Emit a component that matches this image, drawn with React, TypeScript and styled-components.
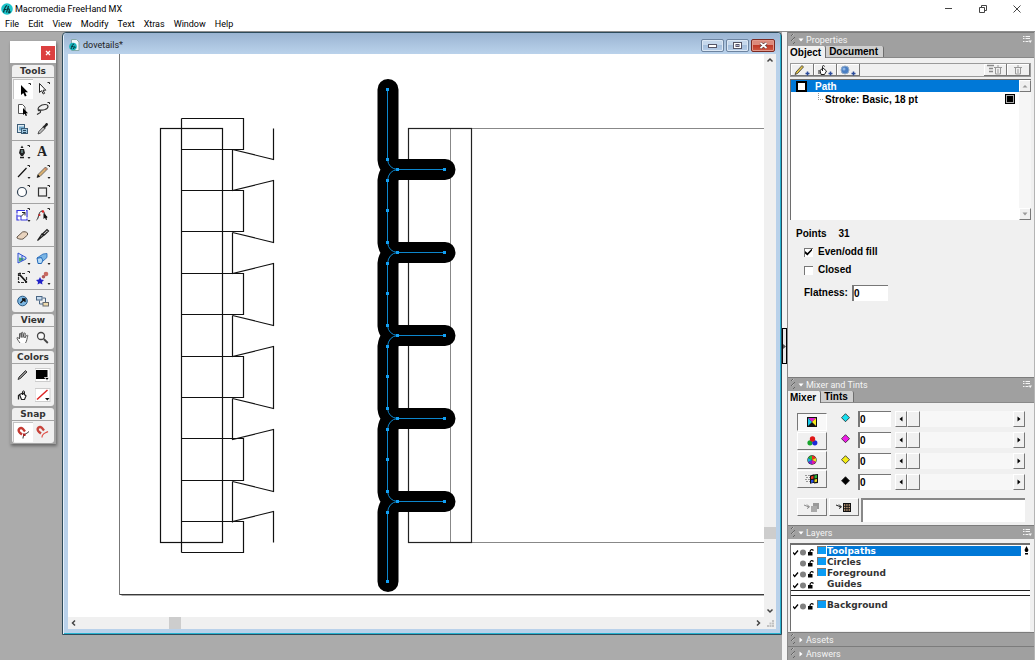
import React from "react";
import styled, { createGlobalStyle, css } from "styled-components";

const ui = `Roboto, "Noto Sans", sans-serif`;
const bold = `"Liberation Sans", Arial, sans-serif`;
const wide = `"DejaVu Sans", Verdana, sans-serif`;

const GlobalStyle = createGlobalStyle`
  *, *::before, *::after { box-sizing: border-box; }
  body { margin: 0; background: #ababab; font-family: ${ui}; font-size: 9px; color: #000; }
  button, input { font: inherit; color: inherit; margin: 0; padding: 0; border: 0; background: none; border-radius: 0; }
  h1, h2, h3, ul { margin: 0; padding: 0; font: inherit; list-style: none; }
  svg { display: block; flex: none; }
`;

/* ---------- application frame ---------- */

const Shell = styled.div`
  display: flex;
  flex-direction: column;
  min-height: 100vh;
`;

const TitleBar = styled.header`
  display: flex;
  align-items: center;
  height: 17px;
  padding: 0 1px;
  background: #fff;
`;

const AppTitle = styled.h1`
  flex: 1;
  padding-left: 2px;
  font-size: 9px;
  line-height: 16px;
`;

const CaptionButton = styled.button`
  display: flex;
  align-items: center;
  justify-content: center;
  width: 34px;
  height: 16px;
`;

const MenuBar = styled.nav`
  display: flex;
  gap: 1px;
  height: 15px;
  padding-left: 1px;
  background: #fff;
  border-bottom: 1px solid #8e8e8e;
`;

const MenuItem = styled.button`
  padding: 0 4px;
  line-height: 13px;
`;

const Workspace = styled.div`
  display: flex;
  flex: 1;
  align-items: stretch;
  background: #ababab;
`;

/* ---------- tool palette ---------- */

const Palette = styled.aside`
  align-self: flex-start;
  width: 46px;
  margin: 9px 6px 0 10px;
  background: #a2a2a2;
  box-shadow: 1px 2px 3px rgba(0, 0, 0, 0.4);
`;

const PaletteCaption = styled.div`
  display: flex;
  justify-content: flex-end;
  height: 22px;
  padding: 5px 1px 0 0;
  background: #fff;
`;

const PaletteClose = styled.button`
  display: flex;
  align-items: center;
  justify-content: center;
  width: 14px;
  height: 14px;
  background: #dc4040;
`;

const PaletteBody = styled.div`
  display: flex;
  flex-direction: column;
  gap: 2px;
  padding: 2px 2px 1px;
`;

const Section = styled.section`
  background: #f0f0f0;
  border-radius: 3px;
`;

const SectionTitle = styled.h2`
  font: bold 9px/13px ${wide};
  text-align: center;
  height: 12px;
  color: #333;
`;

const ToolGroup = styled.div`
  display: grid;
  grid-template-columns: 20px 20px;
  grid-auto-rows: 20px;
  padding: 1px;
  border-top: 1px solid #a4a4a4;
`;

const Tool = styled.button<{ $active?: boolean }>`
  display: flex;
  align-items: center;
  justify-content: center;
  ${(p) =>
    p.$active &&
    css`
      background: #fff;
      border-left: 1px solid #c4c4c4;
      border-top: 1px solid #c4c4c4;
    `}
`;

/* ---------- document window ---------- */

const DocFrame = styled.section`
  display: flex;
  flex-direction: column;
  flex: 1;
  min-width: 0;
  margin-bottom: 25px;
  border: 1px solid #2d4a5a;
  border-radius: 4px 4px 0 0;
  background: #b9d1ea;
  box-shadow: inset 1px 1px 0 #e6f1fb, inset -1px -1px 0 #27b3d0;
  padding: 0 5px 5px;
`;

const DocTitleBar = styled.div`
  display: flex;
  align-items: center;
  height: 21px;
  margin: 0 -4px;
  padding: 3px 5px 0;
  gap: 2px;
  background: linear-gradient(#9ab4d2, #bad2eb);
  border-radius: 3px 3px 0 0;
`;

const DocTitle = styled.h2`
  flex: 1;
  padding-left: 1px;
  font-size: 9px;
  line-height: 14px;
  color: #222;
`;

const DocButton = styled.button<{ $close?: boolean }>`
  display: flex;
  align-items: center;
  justify-content: center;
  width: ${(p) => (p.$close ? 24 : 23)}px;
  height: 13px;
  border: 1px solid ${(p) => (p.$close ? "#7c2a22" : "#6d84a0")};
  border-radius: 2px;
  box-shadow: inset 0 0 0 1px ${(p) => (p.$close ? "#e39a8c" : "#dce8f5")};
  background: ${(p) =>
    p.$close
      ? "linear-gradient(#dc8a7c 45%, #c03a28 50%, #cf5a44)"
      : "linear-gradient(#c6d8ec 45%, #a5bfdc 50%, #b6cde8)"};
`;

const DocContent = styled.div`
  display: grid;
  flex: 1;
  grid-template-columns: minmax(0, 1fr) 12px;
  grid-template-rows: minmax(0, 1fr) 12px;
  background: #f0f0f0;
`;

const CanvasView = styled.div`
  display: flex;
  background: #fff;
  overflow: hidden;
  min-height: 400px;
`;

const Artboard = styled.svg`
  width: 100%;
  height: auto;
`;

const VScroll = styled.div`
  display: flex;
  flex-direction: column;
  align-items: center;
`;

const HScroll = styled.div`
  display: flex;
  align-items: center;
`;

const ScrollArrow = styled.button`
  display: flex;
  align-items: center;
  justify-content: center;
  width: 12px;
  height: 12px;
`;

const Spacer = styled.div<{ $grow: number }>`
  flex: ${(p) => p.$grow} 1 0;
`;

const ScrollThumb = styled.div`
  width: 12px;
  height: 12px;
  background: #cdcdcd;
`;

const GripCorner = styled.div`
  display: flex;
  align-items: flex-end;
  justify-content: flex-end;
  padding: 2px;
`;

/* ---------- dock ---------- */

const Splitter = styled.div`
  display: flex;
  align-items: center;
  width: 5px;
  background: #f4f4f4;
`;

const SplitterHandle = styled.button`
  display: flex;
  align-items: center;
  justify-content: center;
  width: 5px;
  height: 36px;
  border: 1px solid #000;
  background: #e8e8e8;
`;

const Dock = styled.aside`
  display: flex;
  flex-direction: column;
  width: 248px;
  border-left: 1px solid #8a8a8a;
  border-right: 1px solid #b4b4b4;
  background: #f0f0f0;
`;

const PanelBox = styled.section<{ $grow?: boolean }>`
  display: flex;
  flex-direction: column;
  flex: ${(p) => (p.$grow ? "1 0 auto" : "none")};
  border-top: 1px solid #7c7c7c;
`;

const PanelHeader = styled.div`
  display: flex;
  align-items: center;
  height: 13px;
  padding: 0 2px;
  gap: 2px;
  background: #a0a0a0;
  color: #f4f4f4;
`;

const PanelTitle = styled.h2`
  flex: 1;
  font: 9px/12px ${ui};
`;

const PlainButton = styled.button`
  display: flex;
  align-items: center;
  justify-content: center;
`;

const TabRow = styled.div`
  display: flex;
  align-items: flex-end;
  height: 12px;
  background: #a0a0a0;
  border-bottom: 1px solid #888;
`;

const Tab = styled.button<{ $active?: boolean }>`
  height: ${(p) => (p.$active ? 12 : 11)}px;
  margin-bottom: ${(p) => (p.$active ? -1 : 0)}px;
  padding: 0 ${(p) => (p.$active ? 4 : 5)}px 0 ${(p) => (p.$active ? 2 : 3)}px;
  font: bold 10px/11px ${bold};
  background: ${(p) => (p.$active ? "#f0f0f0" : "#cfcfcf")};
  border-right: 1px solid #6e6e6e;
  border-radius: 0 2px 0 0;
`;

const PropertiesBody = styled.div`
  display: flex;
  flex-direction: column;
  flex: 1;
  padding: 5px 3px 0 2px;
  font: bold 10px/14px ${bold};
`;

const ObjectToolbar = styled.div`
  display: flex;
  height: 14px;
  border: 1px solid #9a9a9a;
`;

const ObjectTool = styled.button<{ $push?: boolean }>`
  display: flex;
  align-items: center;
  justify-content: center;
  width: 23px;
  border-right: 1px solid #777;
  border-bottom: 1px solid #777;
  box-shadow: inset 1px 1px 0 #fff;
  margin-left: ${(p) => (p.$push ? "auto" : "0")};
`;

const ObjectList = styled.div`
  display: flex;
  height: 141px;
  margin-top: 2px;
  border-left: 1px solid #6e6e6e;
  border-top: 1px solid #6e6e6e;
  background: #fff;
`;

const ObjectRows = styled.ul`
  flex: 1;
  font: bold 10px/13px ${bold};
`;

const PathRow = styled.li`
  display: flex;
  align-items: center;
  height: 12px;
  gap: 8px;
  padding-left: 5px;
  background: #0078d7;
  color: #fff;
`;

const FillChip = styled.span`
  width: 11px;
  height: 11px;
  border: 2px solid #000;
  background: #fff;
`;

const StrokeRow = styled.li`
  display: flex;
  align-items: center;
  height: 14px;
  padding: 0 4px 0 27px;
`;

const TreeElbow = styled.span`
  width: 5px;
  height: 7px;
  margin: 0 2px 6px 0;
  border-left: 1px dotted #999;
  border-bottom: 1px dotted #999;
`;

const StrokeLabel = styled.span`
  flex: 1;
`;

const StrokeChip = styled.span`
  width: 10px;
  height: 10px;
  border: 1px solid #000;
  background: #000;
  box-shadow: inset 0 0 0 1px #aaa;
`;

const ListScroll = styled.div`
  display: flex;
  flex-direction: column;
  justify-content: space-between;
  width: 12px;
  background: #f6f6f6;
`;

const raised = css`
  background: #f0f0f0;
  border: solid;
  border-width: 1px;
  border-color: #fff #777 #777 #fff;
`;

const ListArrow = styled.button`
  ${raised}
  display: flex;
  align-items: center;
  justify-content: center;
  width: 12px;
  height: 12px;
`;

const ObjectForm = styled.div`
  display: flex;
  flex-direction: column;
  padding: 7px 6px 0;
`;

const PointsRow = styled.div`
  display: flex;
  gap: 12px;
  height: 16px;
`;

const CheckRow = styled.label`
  display: flex;
  align-items: center;
  gap: 5px;
  height: 18px;
  padding-left: 8px;
`;

const CheckBox = styled.input`
  appearance: none;
  width: 9px;
  height: 9px;
  background: #fff;
  border-left: 1px solid #777;
  border-top: 1px solid #777;

  &:checked::after {
    content: "";
    display: block;
    width: 7px;
    height: 7px;
    background: #000;
    clip-path: polygon(0 35%, 35% 65%, 100% 0, 100% 30%, 35% 100%, 0 70%);
  }
`;

const FieldRow = styled.label`
  display: flex;
  align-items: center;
  gap: 4px;
  height: 16px;
  margin-top: 6px;
  padding-left: 8px;
`;

const NumberField = styled.input<{ $w: number }>`
  width: ${(p) => p.$w}px;
  height: 16px;
  font: bold 10px/14px ${bold};
  background: #fff;
  border-left: 2px solid #777;
  border-top: 1px solid #777;
`;

/* ---------- mixer ---------- */

const MixerBody = styled.div`
  display: flex;
  flex-direction: column;
  gap: 8px;
  padding: 8px 9px 3px;
`;

const MixerTop = styled.div`
  display: flex;
  gap: 14px;
`;

const ModeColumn = styled.div`
  display: flex;
  flex-direction: column;
  gap: 1px;
  padding-top: 2px;
`;

const MixerButton = styled.button<{ $pressed?: boolean }>`
  display: flex;
  align-items: center;
  justify-content: center;
  width: 30px;
  height: 18px;
  background: ${(p) => (p.$pressed ? "#f8f8f8" : "#f0f0f0")};
  border: solid;
  border-width: 1px;
  border-color: ${(p) => (p.$pressed ? "#777 #fff #fff #777" : "#fff #777 #777 #fff")};
`;

const Channels = styled.div`
  display: flex;
  flex-direction: column;
  flex: 1;
  min-width: 0;
  gap: 5px;
`;

const Channel = styled.div`
  display: flex;
  align-items: center;
  height: 16px;
  gap: 4px;
`;

const ChannelLabel = styled.label`
  display: flex;
  align-items: center;
  gap: 8px;
`;

const SliderTrack = styled.div`
  display: flex;
  flex: 1;
  min-width: 0;
  height: 16px;
  background: #f7f7f7;
`;

const StepButton = styled.button`
  ${raised}
  display: flex;
  flex: none;
  align-items: center;
  justify-content: center;
  width: 12px;
`;

const Slider = styled.input`
  appearance: none;
  flex: 1;
  width: 0;
  min-width: 0;
  height: 16px;

  &::-webkit-slider-thumb {
    ${raised}
    appearance: none;
    box-sizing: border-box;
    width: 13px;
    height: 16px;
  }
`;

const MixerBottom = styled.div`
  display: flex;
  gap: 2px;
`;

const Swatch = styled.div`
  flex: 1;
  height: 24px;
  background: #fff;
  border-left: 2px solid #888;
  border-top: 2px solid #888;
`;

/* ---------- layers ---------- */

const LayersBody = styled.div`
  padding: 4px 4px 1px 2px;
`;

const LayerList = styled.ul`
  height: 88px;
  background: #fff;
  border-left: 1px solid #6e6e6e;
  border-top: 2px solid #6e6e6e;
`;

const LayerRow = styled.li`
  display: flex;
  align-items: center;
  height: 11px;
  padding: 0 1px 0 2px;
  gap: 1px;
`;

const LayerName = styled.span<{ $selected?: boolean }>`
  flex: 1;
  height: 10px;
  margin-right: 2px;
  font: bold 9px/10px ${wide};
  background: ${(p) => (p.$selected ? "#0078d7" : "transparent")};
  color: ${(p) => (p.$selected ? "#fff" : "#333")};
`;

const LayerChip = styled.span<{ $on: boolean }>`
  width: 9px;
  height: 8px;
  margin: 0 0 1px 2px;
  background: ${(p) => (p.$on ? "#0a9cf5" : "transparent")};
  border-left: 1px solid ${(p) => (p.$on ? "#777" : "transparent")};
  border-top: 1px solid ${(p) => (p.$on ? "#777" : "transparent")};
`;

const LayerDivider = styled.li`
  height: 6px;
  margin: 1px 0 3px;
  border-top: 1px solid #222;
  border-bottom: 1px solid #222;
`;

/* ---------- icons ---------- */

const flyout = <path d="M12.5 1.5h2v1.500" stroke="#222" fill="none" />;
const more = <path d="M12.500 13h3l-1.500 2z" fill="#222" />;

const icons: Record<string, React.ReactNode> = {
  Pointer: (<><path d="M5 3v10l2.3-2 1.6 3.5 1.7-.8L9 10.300h3z" fill="#000" />{flyout}</>),
  Subselect: (<><path d="M4.500 2.500v9l2-1.800 1.800 3.300 1.300-.7L8 9.200h2.800z" fill="#fff" stroke="#222" />{flyout}</>),
  Page: (<><path d="M3.500 3.500h4l2.500 2.500v6.500h-6.500z" fill="#fff" stroke="#555" /><path d="M8 7v7l1.700-1.400 1 2.400 1.300-.6-1-2.200h2z" fill="#000" /></>),
  Lasso: (<><path d="M4 10c-3-3 2-6.500 6-6.500 4 0 4 3.500 0 5-3 1-5 .5-6.500 0M4 9.500c2 0 2 2 .5 2.500L2 13.500" fill="none" stroke="#333" strokeWidth="1.200" />{flyout}</>),
  "Output Area": (<><rect x="2.500" y="3.500" width="7" height="8" fill="#dfeaf2" stroke="#3b5d77" /><rect x="4" y="5.500" width="5" height="4" fill="#6fa7c9" /><rect x="6.500" y="7.500" width="6" height="5" fill="#9cc6df" stroke="#3b5d77" /><path d="M8 9.500h3M8 11.500h3" stroke="#27465c" /></>),
  Eyedropper: (<><path d="M3 13l.8-2.500L8 6l1.800 1.800L5.500 12z" fill="#bbb" stroke="#333" strokeWidth=".8" /><path d="M7.500 5l1.500-.3 1.700-2.200c1.300-1.200 3 .3 2 1.700l-2.200 2-.2 1.800z" fill="#222" /></>),
  Pen: (<><path d="M7 1.500l1.500 2.500h-3zM5 5h4l1 4-2 3H6L4 9z" fill="#222" /><path d="M7 6v3" stroke="#9cc" /><path d="M5 13.500h4" stroke="#222" strokeWidth="1.500" />{flyout}{more}</>),
  Line: (<><path d="M3 13L11.500 4" stroke="#111" strokeWidth="1.200" />{flyout}{more}</>),
  Pencil: (<><path d="M2 13.500l1-3L10.500 3l2 2L5 12.500z" fill="#d9b070" stroke="#555" strokeWidth=".8" /><path d="M2 13.500l1-3 2 2z" fill="#111" /><path d="M9.500 4l2 2" stroke="#c66" />{flyout}{more}</>),
  Ellipse: (<><circle cx="7" cy="8" r="4.500" fill="#fff" stroke="#345" strokeWidth="1.200" />{flyout}</>),
  Rectangle: (<><rect x="3.500" y="4" width="8" height="8" fill="none" stroke="#333" strokeWidth="1.200" />{flyout}{more}</>),
  Scale: (<><rect x="2" y="3.500" width="10" height="9.500" fill="#fff" stroke="#3838e0" strokeWidth="1.200" strokeDasharray="8 1" /><path d="M2.500 9h3.500v4" stroke="#3838e0" fill="none" /><path d="M6 9.500l4-4M7 5.500h3v3" stroke="#222" fill="none" />{flyout}{more}</>),
  Freeform: (<><path d="M1.500 13C4 12 3 4.500 7 4c3 0 2 4 5 7" stroke="#222" fill="none" /><path d="M8.500 6v6l1.500-1.300L11 13l1.100-.5-.9-2.300h1.600z" fill="#111" /><circle cx="4.500" cy="8" r="1" fill="#d22" /><circle cx="8" cy="4.500" r="1.200" fill="#d22" />{flyout}</>),
  Eraser: (<path d="M2 10l5.500-5c2-.5 3.500-.3 5 1v2L8 12c-2 .5-4.500 0-6-1z" fill="#e8d3be" stroke="#54463a" strokeWidth=".9" />),
  Knife: (<path d="M2.500 13.500L7 7l1.500 1.500zM8 6.500L12 2.500l1.500 1.500-4 4z" fill="#ddd" stroke="#222" strokeWidth="1.200" />),
  Perspective: (<><path d="M3 3l8 4.500v1.500l-8 4z" fill="#d8e6f6" stroke="#2c4fd0" /><path d="M4 7.500l6 1.300-6 3z" fill="#48b062" /><path d="M7 5.500v5.500" stroke="#2c4fd0" />{more}</>),
  Extrude: (<><path d="M2 8l4.500-.5 1.500 2.500-1.500 3.500H3z" fill="#b7dcf6" stroke="#2468b8" /><path d="M2 8l6-4 4-.5v4L8 11 6.500 7.500z" fill="#7ab5e4" stroke="#2468b8" strokeWidth=".8" />{more}</>),
  "Trace Tool": (<><path d="M3 3.500h7M3.500 3v9.500h8V6" stroke="#333" fill="none" strokeWidth="1.200" strokeDasharray="3 1" /><path d="M5 5l6.500 7" stroke="#111" strokeWidth="1.800" /><path d="M5 2.500v3M3 6l2-1" stroke="#111" />{flyout}</>),
  Blend: (<><path d="M5 7l1.200 2.600 2.800.4-2 2 .5 2.500L5 13.300l-2.500 1.200L3 12 1 10l2.800-.4z" fill="#2222c8" /><circle cx="11" cy="4" r="2.300" fill="#c86a60" /><circle cx="8.500" cy="6.800" r="1.800" fill="#b45a58" />{more}</>),
  Action: (<><circle cx="7.500" cy="8" r="4.800" fill="#7cb7e2" stroke="#2b5a85" /><path d="M5.500 10l4-4M7 6h3v3" stroke="#111" fill="none" strokeWidth="1.300" /></>),
  Connector: (<><rect x="1.500" y="3.500" width="5.500" height="3.500" fill="#c7dbee" stroke="#4a6684" /><rect x="8" y="9.500" width="5.500" height="3.500" fill="#f0dcae" stroke="#6a6a6a" /><path d="M4.500 7.500v3.500h3.500M7.500 5h3v4" stroke="#4a6684" fill="none" /></>),
  Hand: (<path d="M5 13C3.500 11 2 9 2 8s1.500-.5 2.500 1V4c0-1 1.200-1 1.300 0l.4 3.500.3-4.500c.1-1 1.400-1 1.400 0L8 7.500 9 3.500c.2-1 1.400-.7 1.300.2L9.800 8l1.700-2.500c.6-.8 1.600-.3 1.200.6C12 8 12 11 10.500 13" fill="#fff" stroke="#444" strokeWidth=".9" />),
  Zoom: (<><circle cx="6" cy="6" r="3.500" fill="#fafafa" stroke="#444" strokeWidth="1.300" /><path d="M8.800 9l4 4" stroke="#444" strokeWidth="1.800" /></>),
  "Stroke Color": (<path d="M3 12.500l1-2.500L10.500 3.500l1.500 1.500-6.500 6.500z" fill="#888" stroke="#222" strokeWidth=".8" />),
  "Stroke Swatch": (<><rect x="0" y="1.500" width="15" height="13" fill="#fff" stroke="#ccc" /><rect x="1" y="3" width="11.500" height="9" fill="#000" /><path d="M9.500 10.500h5l-2.500 3z" fill="#000" stroke="#fff" strokeWidth=".8" /></>),
  "Fill Color": (<><path d="M4.500 7.500L8 6l3 3-1.500 3.500h-3z" fill="#fff" stroke="#222" strokeWidth="1.200" /><path d="M7.500 8V5c0-1.500 2-1.500 2 0v2" stroke="#222" fill="none" /><path d="M3.500 12.500V8.500l1.500-1" stroke="#222" fill="none" strokeWidth="1.300" /></>),
  "Fill Swatch": (<><rect x="0" y="1.500" width="15" height="13" fill="#fff" stroke="#ccc" /><path d="M2 12.500L12.500 3" stroke="#d22" strokeWidth="1.500" /><path d="M10 11h4.500L12.300 13.500z" fill="#111" /></>),
  "Snap to Point": (<><path d="M3.500 7.500C1 4 5 1.500 7 4l2 2.500M3.500 7.500L6 9.500" stroke="#c43a32" strokeWidth="2.300" fill="none" /><path d="M7 13.500c0-4.500 3-4 6-7" stroke="#333" fill="none" /><rect x="7" y="8.500" width="2.500" height="2.500" fill="#a22" /></>),
  "Snap to Object": (<><path d="M3.500 7.500C1 4 5 1.500 7 4l2 2.500M3.500 7.500L6 9.500" stroke="#c8443c" strokeWidth="2.300" fill="none" /><path d="M7 13.500c0-4.500 3-4 6-6" stroke="#e05048" fill="none" strokeWidth="1.200" /></>),
};

const Glyph16 = ({ name }: { name: string }) => (
  <svg width="16" height="16" viewBox="0 0 16 16" aria-hidden="true">
    {name === "Text" ? (
      <text x="7" y="12" textAnchor="middle" fontFamily="Liberation Serif, serif" fontSize="14" fontWeight="bold" fill="#222">
        A
      </text>
    ) : (
      icons[name]
    )}
  </svg>
);

const AppLogo = ({ size }: { size: number }) => (
  <svg width={size} height={size} viewBox="0 0 12 12" aria-hidden="true">
    <circle cx="6" cy="6" r="5.800" fill="#1cc3c9" />
    <path d="M2.500 9.500C3.500 6 4 3 6 2.500M2.500 6.500h3M5.500 9.500l2-6.500M6 7c2-2.500 3-.5 2 1.500s1 1 1.500 0" stroke="#06353c" strokeWidth="1.200" fill="none" />
  </svg>
);

const DocIcon = () => (
  <svg width="11" height="12" viewBox="0 0 11 12" aria-hidden="true">
    <path d="M2.500.5h5l2.500 2.500v8.500h-7.500z" fill="#f3f8fb" stroke="#8aa" />
    <circle cx="4" cy="7.500" r="3.800" fill="#16b2ba" />
    <path d="M2 10c1-2 1-5 3-5M2.500 7.500h2M4.500 10c.5-3 2-3 1.500-1" stroke="#06353c" fill="none" />
  </svg>
);

const Triangle = ({ dir, color = "#000" }: { dir: "l" | "r" | "u" | "d"; color?: string }) => {
  const d = { l: "M4.500 .5v5L1.500 3z", r: "M1.500 .5v5l3-2.500z", u: "M.5 4.500h5L3 2z", d: "M.5 1.500h5L3 4.500z" }[dir];
  return (
    <svg width="6" height="6" viewBox="0 0 6 6" aria-hidden="true">
      <path d={d} fill={color} />
    </svg>
  );
};

const Chevron = ({ dir }: { dir: "l" | "r" | "u" | "d" }) => {
  const d = { l: "M5 1.500L2.500 4 5 6.500", r: "M3 1.500L5.500 4 3 6.500", u: "M1.500 5.500L4 3l2.500 2.500", d: "M1.500 2.500L4 5l2.500-2.500" }[dir];
  return (
    <svg width="8" height="8" viewBox="0 0 8 8" aria-hidden="true">
      <path d={d} fill="none" stroke="#444" strokeWidth="1.500" />
    </svg>
  );
};

const Gripper = () => (
  <svg width="6" height="11" viewBox="0 0 6 11" aria-hidden="true">
    <path d="M3 0L1 2M5 3L3 5M3 5L1 7M5 8l-2 2" stroke="#555" strokeWidth=".8" />
    <path d="M4 0L2 2M4 5L2 7" stroke="#ccc" strokeWidth=".6" />
  </svg>
);

const OptionsIcon = () => (
  <svg width="10" height="9" viewBox="0 0 10 9" aria-hidden="true">
    <path d="M1 1.500h1.500M3.500 1.500h4.500M1 3.500h1.500M3.500 3.500h4.500M1 6.500h1.500M3.500 6.500h3" stroke="#f4f4f4" />
    <path d="M6.500 5.500h3.500L8.200 8z" fill="#f4f4f4" />
  </svg>
);

const Plus = () => <path d="M14.500 7.500v4M12.500 9.500h4" stroke="#2b4b9a" strokeWidth="1.500" />;

const AddStrokeIcon = () => (
  <svg width="18" height="12" viewBox="0 0 18 12" aria-hidden="true">
    <path d="M2 10.500l1-2.500L9 1.500l1.500 1.500-6 6.500z" fill="#e4c443" stroke="#333" strokeWidth=".8" />
    <Plus />
  </svg>
);

const AddFillIcon = () => (
  <svg width="18" height="12" viewBox="0 0 18 12" aria-hidden="true">
    <path d="M4 6.500L7 4l3.500 3-2 3.500H5z" fill="#fff" stroke="#222" />
    <path d="M6.500 7V2.500c0-1.500 2-1 2 0M3 10V6" stroke="#222" fill="none" />
    <Plus />
  </svg>
);

const AddEffectIcon = () => (
  <svg width="18" height="12" viewBox="0 0 18 12" aria-hidden="true">
    <circle cx="6" cy="6" r="4" fill="#4a7fc4" stroke="#8fa9c8" />
    <circle cx="5" cy="5" r="1.500" fill="#8fb6e6" />
    <Plus />
  </svg>
);

const TrashIcon = ({ lines }: { lines?: boolean }) => (
  <svg width="18" height="11" viewBox="0 0 18 11" aria-hidden="true">
    {lines && <path d="M1 1.500h7M3 4.500h4M3 7.500h4" stroke="#888" strokeWidth="1.300" />}
    <g transform={lines ? "translate(8 1)" : "translate(5 1)"}>
      <path d="M0 2.500h8M3 1h2M1.500 3v6h5V3M4 4v4" stroke="#999" fill="none" />
    </g>
  </svg>
);

const CmykIcon = () => (
  <svg width="10" height="10" viewBox="0 0 10 10" aria-hidden="true">
    <rect width="10" height="10" fill="#111" />
    <path d="M1 1h8L5 5z" fill="#e01fc8" />
    <path d="M1 1v8l4-4z" fill="#18c8e8" />
    <path d="M9 1v8L5 5z" fill="#f6e81c" />
  </svg>
);

const RgbIcon = () => (
  <svg width="11" height="10" viewBox="0 0 11 10" aria-hidden="true">
    <circle cx="3" cy="6.800" r="2.600" fill="#17a52c" />
    <circle cx="7.800" cy="6.800" r="2.600" fill="#1c29d6" />
    <circle cx="5.500" cy="3" r="2.700" fill="#e01818" />
  </svg>
);

const HlsIcon = () => (
  <svg width="10" height="10" viewBox="0 0 10 10" aria-hidden="true">
    <circle cx="5" cy="5" r="4.700" fill="#222" />
    <path d="M5 5V.7A4.300 4.300 0 0 1 8.800 3z" fill="#f03020" />
    <path d="M5 5l3.800-2a4.300 4.300 0 0 1 0 4z" fill="#f0e020" />
    <path d="M5 5l3.800 2A4.300 4.300 0 0 1 5 9.300z" fill="#e018a8" />
    <path d="M5 5v4.300A4.300 4.300 0 0 1 1.200 7z" fill="#7a28d8" />
    <path d="M5 5L1.200 7a4.300 4.300 0 0 1 0-4z" fill="#18b0e0" />
    <path d="M5 5L1.200 3A4.300 4.300 0 0 1 5 .7z" fill="#28c030" />
  </svg>
);

const SystemIcon = () => (
  <svg width="14" height="10" viewBox="0 0 14 10" aria-hidden="true">
    <path d="M0 1.500h5M1 3.500h4M0 5.500h5M1 7.500h4" stroke="#999" strokeDasharray="2 1" />
    <path d="M5 1.500l4-1.200v8.500l-4 1zM9 .5l4-.5v9l-4 .5z" fill="#111" />
    <path d="M6 2.500l2.500-.7v3L6 5z" fill="#e83820" />
    <path d="M9.500 1.500L12 1v3l-2.500.5z" fill="#28b838" />
    <path d="M6 6l2.500-.3v2.500L6 9z" fill="#2850e0" />
    <path d="M9.500 5.500L12 5v2.800l-2.500.5z" fill="#f0d820" />
  </svg>
);

const AddTintIcon = () => (
  <svg width="18" height="11" viewBox="0 0 18 11" aria-hidden="true">
    <path d="M1 3l5 2M4 2.500L6.500 5 4 6.500" stroke="#888" fill="none" />
    <path d="M10 1h6v6h-6z" fill="#999" />
    <path d="M8 4h6v6H8z" fill="#aaa" />
  </svg>
);

const AddSwatchIcon = () => (
  <svg width="18" height="11" viewBox="0 0 18 11" aria-hidden="true">
    <path d="M1 3l5 2M4 2.500L6.500 5 4 6.500" stroke="#222" fill="none" />
    <rect x="8" y="1" width="8" height="9" fill="#111" />
    <path d="M9 3h6M9 5.500h6M9 8h6" stroke="#d8b088" strokeDasharray="1.300 1" strokeWidth="1.300" />
  </svg>
);

const Diamond = ({ color }: { color: string }) => (
  <svg width="9" height="12" viewBox="0 0 9 12" aria-hidden="true">
    <path d="M4.500 .7l4 4-4 4-4-4z" fill={color} stroke="#222" strokeWidth=".8" />
  </svg>
);

const LayerIcons = ({ visible }: { visible: boolean }) => (
  <svg width="21" height="11" viewBox="0 0 21 11" aria-hidden="true">
    {visible && <path d="M0 7.500l1.700 2L5 5.500" stroke="#000" strokeWidth="1.300" fill="none" />}
    <circle cx="10" cy="7.500" r="3" fill="#808080" />
    <rect x="15" y="7" width="4.500" height="3.500" fill="#000" />
    <path d="M17 7c0-2.500 2-3 3.500-1.500" stroke="#000" fill="none" strokeWidth="1.200" />
  </svg>
);

const PenNib = () => <path d="M2.500 0L4.500 4 3.500 6h-2L.5 4zM1 7h3v1.500H1z" fill="#000" />;

/* ---------- drawing on the artboard ---------- */

const TOP = 128;
const BOTTOM = 542;
const PITCH = 83;
const joints = [0, 1, 2, 3, 4].map((i) => 169 + i * PITCH);

const pinEdges = [0, 1, 2, 3, 4].map((i) => ({
  start: 149 + i * PITCH,
  end: 190 + i * PITCH,
}));

const cutterPath = joints
  .map((y, i) => {
    const from = i === 0 ? 89 : y - 41;
    const to = i === joints.length - 1 ? 581 : y + 42;
    return `M388 ${from}V${y - 10}Q389 ${y - 1} 398 ${y}H445M398 ${y}Q389 ${y + 1} 388 ${y + 11}V${to}`;
  })
  .join("");

const anchors: [number, number][] = [
  [388, 89],
  [388, 581],
  ...joints.flatMap((y): [number, number][] => [
    [388, y - 10],
    [398, y],
    [445, y],
    [388, y + 11],
  ]),
  ...joints.slice(1).map((y): [number, number] => [388, y - 42]),
];

const tailPath =
  `M273 ${TOP}V159L232 149` +
  pinEdges
    .map(({ start, end }, i) =>
      i < 4
        ? `M232 ${start}V${end}L273 ${end - 10}V${start + PITCH + 10}L232 ${start + PITCH}`
        : `M232 ${start}V${end}`
    )
    .join("") +
  `M232 521L273 511V${BOTTOM}`;

const pinPath =
  `M181 118H243V149H181` +
  pinEdges
    .map(({ end }, i) => `M181 ${end - (i > 2 ? 1 : 0)}H243V${i < 4 ? end + 41 : 552}H181`)
    .join("") +
  `M181 118V552`;

const Drawing = () => (
  <Artboard role="img" aria-label="Dovetail joint drawing">
    <g transform="translate(-67.5 -53.5)" fill="none">
      <path d="M119 40V594" stroke="#777" />
      <path d="M121 595H1800" stroke="#aaa" />
      <path d="M119 594H1800" stroke="#3a3a3a" />
      <g stroke="#111" strokeWidth="1.200">
        <rect x="160" y={TOP} width="62" height={BOTTOM - TOP} />
        <path d={pinPath} />
        <path d={tailPath} />
      </g>
      <path d={`M1800 ${TOP}H471M1800 ${BOTTOM}H471M450 ${TOP}V${BOTTOM}`} stroke="#888" />
      <rect x="408" y={TOP} width="63" height={BOTTOM - TOP} stroke="#222" strokeWidth="1.200" />
      <g transform="translate(-.5 0)">
        <path d={cutterPath} stroke="#000" strokeWidth="21" strokeLinecap="round" strokeLinejoin="round" />
      </g>
      <g transform="translate(-1 0)">
        <path d={cutterPath} stroke="#0c86cc" />
        {anchors.map(([x, y]) => (
          <rect key={`${x}-${y}`} x={x - 1.5} y={y - 1.5} width="3" height="3" fill="#12a0f4" />
        ))}
      </g>
    </g>
  </Artboard>
);

/* ---------- page parts ---------- */

const toolSections: { title: string; groups: string[][] }[] = [
  {
    title: "Tools",
    groups: [
      ["Pointer", "Subselect", "Page", "Lasso", "Output Area", "Eyedropper"],
      ["Pen", "Text", "Line", "Pencil", "Ellipse", "Rectangle"],
      ["Scale", "Freeform", "Eraser", "Knife"],
      ["Perspective", "Extrude", "Trace Tool", "Blend"],
      ["Action", "Connector"],
    ],
  },
  { title: "View", groups: [["Hand", "Zoom"]] },
  { title: "Colors", groups: [["Stroke Color", "Stroke Swatch", "Fill Color", "Fill Swatch"]] },
  { title: "Snap", groups: [["Snap to Point", "Snap to Object"]] },
];

const activeTools = ["Pointer", "Snap to Point"];

const ToolPalette = () => (
  <Palette aria-label="Tool palette">
    <PaletteCaption>
      <PaletteClose aria-label="Close palette">
        <svg width="6" height="6" viewBox="0 0 6 6" aria-hidden="true">
          <path d="M1 1l4 4M5 1L1 5" stroke="#fff" strokeWidth="1.300" />
        </svg>
      </PaletteClose>
    </PaletteCaption>
    <PaletteBody>
      {toolSections.map((s) => (
        <Section key={s.title}>
          <SectionTitle>{s.title}</SectionTitle>
          {s.groups.map((g) => (
            <ToolGroup key={g[0]}>
              {g.map((name) => (
                <Tool key={name} aria-label={name} $active={activeTools.includes(name)}>
                  <Glyph16 name={name} />
                </Tool>
              ))}
            </ToolGroup>
          ))}
        </Section>
      ))}
    </PaletteBody>
  </Palette>
);

const DocumentWindow = () => (
  <DocFrame>
    <DocTitleBar>
      <DocIcon />
      <DocTitle>dovetails*</DocTitle>
      <DocButton aria-label="Minimize document">
        <svg width="9" height="5" viewBox="0 0 9 5" aria-hidden="true">
          <rect x=".5" y="1.500" width="8" height="3" fill="#fff" stroke="#556" />
        </svg>
      </DocButton>
      <DocButton aria-label="Maximize document">
        <svg width="9" height="7" viewBox="0 0 9 7" aria-hidden="true">
          <rect x=".5" y=".5" width="8" height="6" fill="#fff" stroke="#556" />
          <rect x="3" y="2.500" width="3" height="2" fill="#aac" stroke="#556" />
        </svg>
      </DocButton>
      <DocButton $close aria-label="Close document">
        <svg width="9" height="7" viewBox="0 0 9 7" aria-hidden="true">
          <path d="M1.500 1l6 5M7.500 1l-6 5" stroke="#533" strokeWidth="3" />
          <path d="M1.500 1l6 5M7.500 1l-6 5" stroke="#fff" strokeWidth="1.800" />
        </svg>
      </DocButton>
    </DocTitleBar>
    <DocContent>
      <CanvasView>
        <Drawing />
      </CanvasView>
      <VScroll>
        <ScrollArrow aria-label="Scroll up"><Chevron dir="u" /></ScrollArrow>
        <Spacer $grow={462} />
        <ScrollThumb />
        <Spacer $grow={66} />
        <ScrollArrow aria-label="Scroll down"><Chevron dir="d" /></ScrollArrow>
      </VScroll>
      <HScroll>
        <ScrollArrow aria-label="Scroll left"><Chevron dir="l" /></ScrollArrow>
        <Spacer $grow={89} />
        <ScrollThumb />
        <Spacer $grow={571} />
        <ScrollArrow aria-label="Scroll right"><Chevron dir="r" /></ScrollArrow>
      </HScroll>
      <GripCorner>
        <svg width="7" height="7" viewBox="0 0 7 7" aria-hidden="true">
          <path d="M5 0h2v2H5zM2.500 2.500h2v2h-2zM5 2.500h2v2H5zM0 5h2v2H0zM2.500 5h2v2h-2zM5 5h2v2H5z" fill="#c2c2c2" />
        </svg>
      </GripCorner>
    </DocContent>
  </DocFrame>
);

const Header = ({ title, open = true }: { title: string; open?: boolean }) => (
  <PanelHeader>
    <Gripper />
    <PlainButton aria-label={`Toggle ${title}`}>
      <Triangle dir={open ? "d" : "r"} color="#fff" />
    </PlainButton>
    <PanelTitle>{title}</PanelTitle>
    {open && (
      <PlainButton aria-label={`${title} options`}>
        <OptionsIcon />
      </PlainButton>
    )}
  </PanelHeader>
);

const PropertiesPanel = () => (
  <PanelBox $grow>
    <Header title="Properties" />
    <TabRow>
      <Tab $active>Object</Tab>
      <Tab>Document</Tab>
    </TabRow>
    <PropertiesBody>
      <ObjectToolbar>
        <ObjectTool aria-label="Add stroke"><AddStrokeIcon /></ObjectTool>
        <ObjectTool aria-label="Add fill"><AddFillIcon /></ObjectTool>
        <ObjectTool aria-label="Add effect"><AddEffectIcon /></ObjectTool>
        <ObjectTool $push aria-label="Remove branch"><TrashIcon lines /></ObjectTool>
        <ObjectTool aria-label="Remove item"><TrashIcon /></ObjectTool>
      </ObjectToolbar>
      <ObjectList>
        <ObjectRows>
          <PathRow>
            <FillChip />
            Path
          </PathRow>
          <StrokeRow>
            <TreeElbow />
            <StrokeLabel>Stroke: Basic, 18 pt</StrokeLabel>
            <StrokeChip />
          </StrokeRow>
        </ObjectRows>
        <ListScroll>
          <ListArrow aria-label="Scroll list up"><Triangle dir="u" color="#999" /></ListArrow>
          <ListArrow aria-label="Scroll list down"><Triangle dir="d" color="#999" /></ListArrow>
        </ListScroll>
      </ObjectList>
      <ObjectForm>
        <PointsRow>
          <span>Points</span>
          <span>31</span>
        </PointsRow>
        <CheckRow>
          <CheckBox type="checkbox" defaultChecked />
          Even/odd fill
        </CheckRow>
        <CheckRow>
          <CheckBox type="checkbox" />
          Closed
        </CheckRow>
        <FieldRow>
          Flatness:
          <NumberField $w={36} defaultValue="0" />
        </FieldRow>
      </ObjectForm>
    </PropertiesBody>
  </PanelBox>
);

const channels = [
  { name: "Cyan", color: "#18e0f0" },
  { name: "Magenta", color: "#f01ce8" },
  { name: "Yellow", color: "#f4ec14" },
  { name: "Black", color: "#000" },
];

const MixerPanel = () => (
  <PanelBox>
    <Header title="Mixer and Tints" />
    <TabRow>
      <Tab $active>Mixer</Tab>
      <Tab>Tints</Tab>
    </TabRow>
    <MixerBody>
      <MixerTop>
        <ModeColumn>
          <MixerButton $pressed aria-label="CMYK"><CmykIcon /></MixerButton>
          <MixerButton aria-label="RGB"><RgbIcon /></MixerButton>
          <MixerButton aria-label="HLS"><HlsIcon /></MixerButton>
          <MixerButton aria-label="System colors"><SystemIcon /></MixerButton>
        </ModeColumn>
        <Channels>
          {channels.map((c) => (
            <Channel key={c.name}>
              <ChannelLabel>
                <Diamond color={c.color} />
                <NumberField $w={33} aria-label={c.name} defaultValue="0" />
              </ChannelLabel>
              <SliderTrack>
                <StepButton aria-label={`Less ${c.name}`}><Triangle dir="l" /></StepButton>
                <Slider type="range" min={0} max={100} defaultValue={0} aria-label={`${c.name} level`} />
                <StepButton aria-label={`More ${c.name}`}><Triangle dir="r" /></StepButton>
              </SliderTrack>
            </Channel>
          ))}
        </Channels>
      </MixerTop>
      <MixerBottom>
        <MixerButton aria-label="Add to tints"><AddTintIcon /></MixerButton>
        <MixerButton aria-label="Add to swatches"><AddSwatchIcon /></MixerButton>
        <Swatch />
      </MixerBottom>
    </MixerBody>
  </PanelBox>
);

type Layer = { name: string; visible: boolean; chip: boolean; selected?: boolean };

const layers: Layer[] = [
  { name: "Toolpaths", visible: true, chip: true, selected: true },
  { name: "Circles", visible: false, chip: true },
  { name: "Foreground", visible: true, chip: true },
  { name: "Guides", visible: true, chip: false },
];

const LayerItem = ({ layer }: { layer: Layer }) => (
  <LayerRow>
    <LayerIcons visible={layer.visible} />
    <LayerChip $on={layer.chip} />
    <LayerName $selected={layer.selected}>{layer.name}</LayerName>
    <svg width="5" height="9" viewBox="0 0 5 9" aria-hidden="true">{layer.selected && <PenNib />}</svg>
  </LayerRow>
);

const LayersPanel = () => (
  <PanelBox>
    <Header title="Layers" />
    <LayersBody>
      <LayerList>
        {layers.map((l) => (
          <LayerItem key={l.name} layer={l} />
        ))}
        <LayerDivider />
        <LayerItem layer={{ name: "Background", visible: true, chip: true }} />
      </LayerList>
    </LayersBody>
  </PanelBox>
);

const menus = ["File", "Edit", "View", "Modify", "Text", "Xtras", "Window", "Help"];

export default function App() {
  return (
    <Shell>
      <GlobalStyle />
      <TitleBar>
        <AppLogo size={12} />
        <AppTitle>Macromedia FreeHand MX</AppTitle>
        <CaptionButton aria-label="Minimize">
          <svg width="8" height="8" viewBox="0 0 8 8" aria-hidden="true"><path d="M0 3.500h7" stroke="#444" /></svg>
        </CaptionButton>
        <CaptionButton aria-label="Restore">
          <svg width="8" height="8" viewBox="0 0 8 8" aria-hidden="true">
            <path d="M.5 2.500h5v5h-5zM2.500 2.500v-2h5v5h-2" stroke="#444" fill="none" />
          </svg>
        </CaptionButton>
        <CaptionButton aria-label="Close">
          <svg width="8" height="8" viewBox="0 0 8 8" aria-hidden="true">
            <path d="M.5.5l7 7M7.500.5l-7 7" stroke="#444" />
          </svg>
        </CaptionButton>
      </TitleBar>
      <MenuBar>
        {menus.map((m) => (
          <MenuItem key={m}>{m}</MenuItem>
        ))}
      </MenuBar>
      <Workspace>
        <ToolPalette />
        <DocumentWindow />
        <Splitter>
          <SplitterHandle aria-label="Collapse panels">
            <svg width="3" height="5" viewBox="0 0 3 5" aria-hidden="true"><path d="M0 0v5l3-2.500z" fill="#555" /></svg>
          </SplitterHandle>
        </Splitter>
        <Dock>
          <PropertiesPanel />
          <MixerPanel />
          <LayersPanel />
          <PanelBox>
            <Header title="Assets" open={false} />
          </PanelBox>
          <PanelBox>
            <Header title="Answers" open={false} />
          </PanelBox>
        </Dock>
      </Workspace>
    </Shell>
  );
}
